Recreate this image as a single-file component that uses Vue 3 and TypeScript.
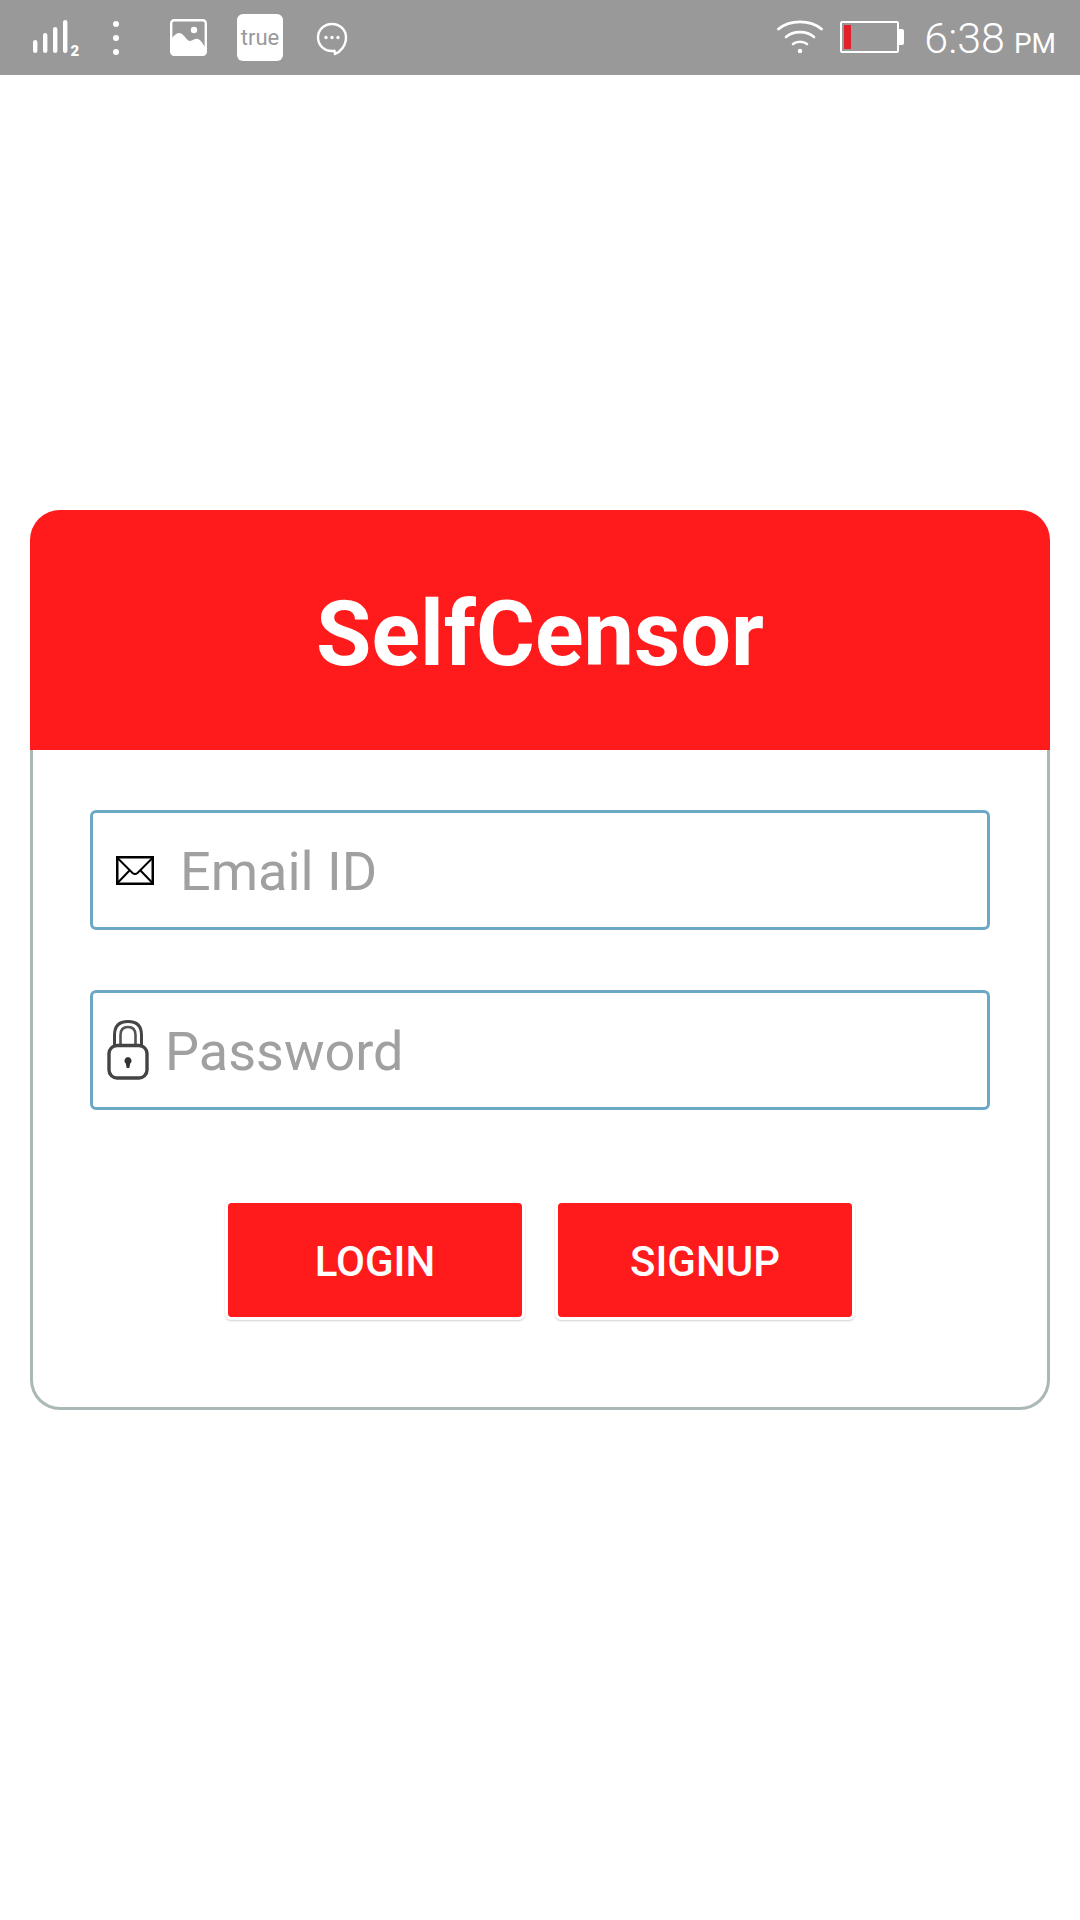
<script setup lang="ts">
const signalBars = [
  { x: 33, y: 40, h: 13 },
  { x: 43, y: 33, h: 20 },
  { x: 53, y: 27, h: 26 },
  { x: 63, y: 20, h: 33 },
];
</script>

<template>
  <div class="screen">
    <header class="status-bar">
      <div class="status-left">
        <svg class="icon-signal" width="52" height="42" viewBox="30 17 52 42">
          <rect
            v-for="bar in signalBars"
            :key="bar.x"
            :x="bar.x"
            :y="bar.y"
            width="4.4"
            :height="bar.h"
            rx="2.2"
            fill="#fff"
          />
          <text x="70.5" y="56" class="sim-number">2</text>
        </svg>
        <svg class="icon-more" width="8" height="36" viewBox="0 0 8 36">
          <circle cx="4" cy="4" r="3" fill="#fff" />
          <circle cx="4" cy="18" r="3" fill="#fff" />
          <circle cx="4" cy="32" r="3" fill="#fff" />
        </svg>
        <svg class="icon-image" width="37" height="37" viewBox="0 0 37 37">
          <rect x="1.2" y="1.2" width="34.6" height="34.6" rx="3" fill="#999" stroke="#fff" stroke-width="2.4" />
          <circle cx="24" cy="11" r="3.2" fill="#fff" />
          <path d="M2 19 C6 14 9 13 12 15 C15 17 17 22 20 22 C23 22 25 19 28 20 C31 21 33 25 35 28 V35 H2 Z" fill="#fff" />
        </svg>
        <div class="true-badge">true</div>
        <svg class="icon-chat" width="32" height="34" viewBox="0 0 32 34">
          <path d="M16 2 C8 2 2 8 2 15.5 C2 23 8 29 16 29 C17 29 17.5 29 18.5 28.8 L19 32 C24 30 30 24 30 15.5 C30 8 24 2 16 2 Z" fill="none" stroke="#fff" stroke-width="2.4" stroke-linejoin="round" />
          <circle cx="10" cy="15.5" r="1.7" fill="#fff" />
          <circle cx="16" cy="15.5" r="1.7" fill="#fff" />
          <circle cx="22" cy="15.5" r="1.7" fill="#fff" />
        </svg>
      </div>
      <div class="status-right">
        <svg class="icon-wifi" width="46" height="34" viewBox="0 0 46 34">
          <path d="M1.5 9 C13 -0.5 33 -0.5 44.5 9" fill="none" stroke="#fff" stroke-width="2.8" stroke-linecap="round" />
          <path d="M9 17 C16 10.5 30 10.5 37 17" fill="none" stroke="#fff" stroke-width="2.6" stroke-linecap="round" />
          <path d="M16 24 C19.5 21 26.5 21 30 24" fill="none" stroke="#fff" stroke-width="2.6" stroke-linecap="round" />
          <circle cx="23" cy="31" r="2.2" fill="#fff" />
        </svg>
        <div class="battery">
          <div class="battery-level"></div>
        </div>
        <div class="clock">6:38<span class="clock-suffix">PM</span></div>
      </div>
    </header>

    <main class="login-card">
      <div class="card-header">
        <h1>SelfCensor</h1>
      </div>
      <form class="card-body" @submit.prevent>
        <label class="field field--email">
          <svg class="icon-mail" width="38" height="29" viewBox="0 0 38 29">
            <rect x="1.25" y="1.25" width="35.5" height="26.5" fill="#fff" stroke="#000" stroke-width="2.5" />
            <path d="M1.5 2 L16.5 17 Q19 19 21.5 17 L36.5 2 M1.5 27 L13.5 14.5 M36.5 27 L24.5 14.5" fill="none" stroke="#000" stroke-width="2" />
          </svg>
          <input type="email" placeholder="Email ID" />
        </label>
        <label class="field field--password">
          <svg class="icon-lock" width="42" height="60" viewBox="0 0 42 60">
            <path d="M7.5 26 V15 C7.5 5 13 1.5 21 1.5 C29 1.5 34.5 5 34.5 15 V26" fill="none" stroke="#444" stroke-width="3" />
            <path d="M13.5 26 V15 C13.5 9.5 16 7 21 7 C26 7 28.5 9.5 28.5 15 V26" fill="none" stroke="#555" stroke-width="2.6" />
            <rect x="2" y="25.5" width="38" height="32.5" rx="8" fill="#fff" stroke="#444" stroke-width="3.4" />
            <path d="M21 37 a3.6 3.6 0 0 1 2.2 6.4 L22.3 48 H19.7 L18.8 43.4 a3.6 3.6 0 0 1 2.2 -6.4 Z" fill="#333" />
          </svg>
          <input type="password" placeholder="Password" />
        </label>
        <div class="actions">
          <button type="button" class="action-btn">LOGIN</button>
          <button type="button" class="action-btn">SIGNUP</button>
        </div>
      </form>
    </main>
  </div>
</template>

<style scoped>
.screen {
  width: 1080px;
  height: 1920px;
  background: #fff;
  font-family: Roboto, "Liberation Sans", sans-serif;
  overflow: hidden;
}
.status-bar {
  display: flex;
  justify-content: space-between;
  align-items: center;
  height: 75px;
  padding: 0 24px 0 30px;
  box-sizing: border-box;
  background: #999;
  color: #fff;
}
.status-left,
.status-right {
  display: flex;
  align-items: center;
}
.sim-number {
  font-size: 15px;
  font-weight: 900;
  fill: #fff;
}
.icon-more {
  margin-left: 30px;
}
.icon-image {
  margin-left: 50px;
}
.true-badge {
  display: flex;
  align-items: center;
  justify-content: center;
  width: 46px;
  height: 47px;
  margin-left: 30px;
  border-radius: 6px;
  background: #fff;
  color: #999;
  font-size: 22px;
}
.icon-chat {
  margin-left: 33px;
  margin-top: 2px;
}
.icon-wifi {
  margin-top: -1px;
}
.battery {
  position: relative;
  box-sizing: border-box;
  width: 59px;
  height: 32px;
  margin-left: 17px;
  margin-top: -2px;
  padding: 2px;
  border: 2px solid #fff;
  border-radius: 2px;
}
.battery::after {
  content: "";
  position: absolute;
  top: 6px;
  right: -7px;
  width: 5px;
  height: 16px;
  background: #fff;
  border-radius: 0 2px 2px 0;
}
.battery-level {
  width: 7px;
  height: 100%;
  background: #e0202a;
}
.clock {
  margin-left: 25px;
  padding-top: 7px;
  font-size: 43px;
  font-weight: 300;
  line-height: 68px;
}
.clock-suffix {
  margin-left: 9px;
  font-size: 28px;
  font-weight: 400;
}
.login-card {
  margin: 435px 30px 0;
}
.card-header {
  display: flex;
  align-items: center;
  justify-content: center;
  box-sizing: border-box;
  height: 240px;
  padding-top: 8px;
  background: #ff1a1c;
  border-radius: 30px 30px 0 0;
}
.card-header h1 {
  margin: 0;
  color: #fff;
  font-size: 90px;
  font-weight: 700;
}
.card-body {
  display: flex;
  flex-direction: column;
  gap: 60px;
  padding: 60px 57px 87px;
  background: #fff;
  border: solid #aab8b8;
  border-width: 0 3px 3px;
  border-radius: 0 0 30px 30px;
}
.field {
  display: flex;
  align-items: center;
  box-sizing: border-box;
  height: 120px;
  border: 3px solid #6aa8c4;
  border-radius: 6px;
}
.field--email {
  padding-left: 23px;
}
.field--password {
  padding-left: 14px;
}
.field input {
  flex: 1;
  min-width: 0;
  padding: 3px 0 0;
  border: none;
  outline: none;
  background: transparent;
  color: #333;
  font-family: inherit;
  font-size: 54px;
}
.field input::placeholder {
  color: #a0a0a0;
  opacity: 1;
}
.field--email input {
  margin-left: 26px;
}
.field--password input {
  margin-left: 16px;
}
.actions {
  display: flex;
  justify-content: center;
  gap: 30px;
  margin-top: 30px;
}
.action-btn {
  box-sizing: border-box;
  width: 300px;
  height: 120px;
  padding-top: 4px;
  border: 3px solid #fff;
  border-radius: 6px;
  background: #ff1a1c;
  background-clip: padding-box;
  box-shadow: 0 1px 2px rgba(0, 0, 0, 0.18);
  color: #fff;
  font-family: inherit;
  font-size: 42px;
  font-weight: 500;
}
</style>
